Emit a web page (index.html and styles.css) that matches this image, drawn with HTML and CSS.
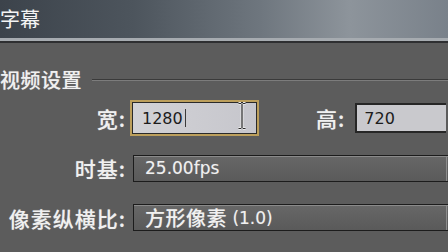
FILE: index.html
```
<!DOCTYPE html>
<html lang="zh">
<head>
  <meta charset="UTF-8">
  <title>字幕</title>
  <link rel="stylesheet" href="styles.css">
</head>
<body>
<div class="dialog">
  <div class="titlebar">字幕</div>
  <div class="title-rule"></div>

  <div class="panel">
    <div class="section">
      <span class="section-name">视频设置</span>
      <span class="section-line"></span>
    </div>

    <div class="form">
      <label class="lbl">宽:</label>
      <div class="pair">
        <div class="field focus">
          <span class="val">1280</span><span class="caret"></span>
          <svg class="ibeam" width="10" height="28" viewBox="0 0 10 28">
            <path d="M1.5 1.5h2.5M6 1.5h2.5M5 1.5v25M1.5 26.5h2.5M6 26.5h2.5" stroke="#e8e8e8" stroke-width="3" fill="none"/>
            <path d="M1.5 1.5h2.5M6 1.5h2.5M5 1.5v25M1.5 26.5h2.5M6 26.5h2.5" stroke="#2a2a2a" stroke-width="1.2" fill="none"/>
          </svg>
        </div>
        <label class="lbl lbl-h">高:</label>
        <div class="field edge">
          <span class="val">720</span>
        </div>
      </div>

      <label class="lbl">时基:</label>
      <div class="select">
        <span class="sel-val">25.00fps</span>
        <span class="sel-arrow"></span>
      </div>

      <label class="lbl">像素纵横比:</label>
      <div class="select">
        <span class="sel-val"><span class="cjk">方形像素</span>&nbsp;(1.0)</span>
        <span class="sel-arrow"></span>
      </div>
    </div>
  </div>
</div>
</body>
</html>
```
FILE: styles.css
```
:root {
  --panel:#5c5c5c;
  --ink:#f0f0f0;
}

html, body {
  margin:0;
  padding:0;
}

body {
  width:448px;
  height:252px;
  overflow:hidden;
  background:var(--panel);
  font-family:"DejaVu Sans", "Noto Sans CJK SC", sans-serif;
  color:var(--ink);
}

.titlebar {
  height:38px;
  line-height:38px;
  font-family:"Noto Sans CJK SC", sans-serif;
  font-size:20px;
  color:#f4f4f4;
  background:linear-gradient(to right, #3c434b 0%, #4d555d 30%, #6e767e 58%, #8d949b 78%, #79818a 100%);
}

.title-rule {
  border-top:3px solid #a6abb0;
  border-bottom:2px solid #2e2f31;
}

.section {
  display:flex;
  align-items:center;
  height:26px;
  margin-top:23px;
}
.section-name {
  font-family:"Noto Sans CJK SC", sans-serif;
  font-size:20px;
  font-weight:500;
  letter-spacing:0.5px;
  text-shadow:0 0 1px rgba(255,255,255,.4);
}
.section-line {
  flex:1;
  height:1px;
  margin-left:10px;
  margin-top:2px;
  background:#3a3a3a;
  border-bottom:1px solid #7c7c7c;
}

.form {
  display:grid;
  grid-template-columns:126px 1fr;
  column-gap:7px;
  row-gap:19px;
  margin-top:10px;
  align-items:center;
}

.lbl {
  text-align:right;
  font-family:"Noto Sans CJK SC", sans-serif;
  font-size:21px;
  font-weight:500;
  letter-spacing:1px;
  white-space:nowrap;
  text-shadow:0 0 1px rgba(255,255,255,.4);
}

.pair {
  display:flex;
  align-items:center;
  margin-left:-1px;
}
.lbl-h {
  margin-left:59px;
  margin-right:10px;
}

.field {
  position:relative;
  display:flex;
  align-items:center;
  box-sizing:border-box;
  width:122px;
  height:30px;
  padding-left:7px;
  background:#c9c9cd;
  border:2px solid #262626;
  color:#1c1c1c;
  font-size:16px;
}
.field.edge {
  width:91px;
  border-right:0;
}
.field.focus {
  width:125px;
  height:32px;
  background:linear-gradient(to right, #d2d2d6, #c6c6cc);
  border:1px solid #2a2a2a;
  box-shadow:0 0 0 2px #bc9f5c;
  padding-left:9px;
}
.caret {
  width:1px;
  height:18px;
  margin-left:2px;
  background:#3a3a3a;
}
.ibeam {
  position:absolute;
  left:104px;
  top:-1px;
}

.select {
  display:flex;
  align-items:stretch;
  height:27px;
  box-sizing:border-box;
  background:linear-gradient(#676767, #5a5a5a);
  border:1px solid #1c1c1c;
  border-right:0;
  box-shadow:inset 0 1px 0 #8a8a8a;
  font-size:17px;
}
.select + .lbl {
  margin-top:1px;
}
.sel-val {
  flex:1;
  display:flex;
  align-items:center;
  padding-left:11px;
  white-space:nowrap;
  text-shadow:0 0 1px rgba(255,255,255,.3);
}
.cjk {
  font-family:"Noto Sans CJK SC", sans-serif;
  font-size:20px;
  font-weight:500;
  letter-spacing:0.5px;
}
.sel-arrow {
  width:1px;
  border-left:1px solid #8c8c8c;
}
```
